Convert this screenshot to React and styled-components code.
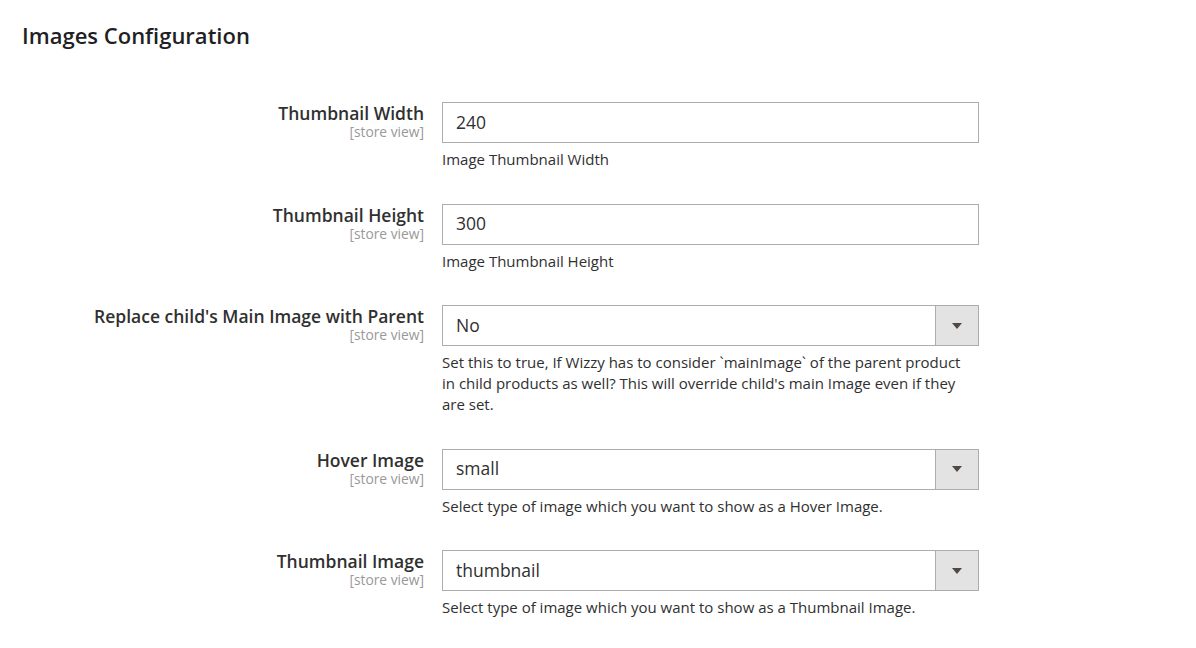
import React from 'react'
import styled, { createGlobalStyle } from 'styled-components'

const GlobalStyle = createGlobalStyle`
  body { margin: 0; background: #fff; font-family: "Open Sans", "Liberation Sans", sans-serif; color: #303030; }
`;

const Page = styled.div`padding:21px 0 0 22px;`;
const Title = styled.h2`margin:0 0 53px;font-size:22px;font-weight:600;line-height:28px;color:#1f1f25;`;
const Form = styled.div`display:flex;flex-direction:column;gap:33.5px;`;
const Row = styled.div`display:grid;grid-template-columns:402px 537px;column-gap:18px;align-items:start;`;
const LabelCol = styled.div`display:flex;flex-direction:column;align-items:flex-end;text-align:right;`;
const Label = styled.label`font-size:17.5px;font-weight:600;line-height:22px;color:#303030;`;
const Scope = styled.span`font-size:13.8px;line-height:16px;color:#999;`;
const Control = styled.div`display:flex;flex-direction:column;`;
const Input = styled.div`height:41px;box-sizing:border-box;border:1px solid #adadad;background:#fff;padding:0 13px 2px;display:flex;align-items:center;font-size:17.5px;color:#303030;`;
const Select = styled.div`height:41px;box-sizing:border-box;border:1px solid #adadad;background:#fff;display:flex;align-items:stretch;`;
const SelectValue = styled.div`flex:1;padding:0 13px 2px;display:flex;align-items:center;font-size:17.5px;color:#303030;`;
const SelectButton = styled.div`width:42px;background:#e3e3e3;border-left:1px solid #adadad;display:flex;align-items:center;justify-content:center;`;
const Arrow = styled.span`width:0;height:0;border-left:5px solid transparent;border-right:5px solid transparent;border-top:6px solid #514943;`;
const Note = styled.div`margin-top:6px;max-width:532px;font-size:15px;line-height:21px;color:#303030;`;

const fields = [
  { label: 'Thumbnail Width', type: 'input', value: '240', note: 'Image Thumbnail Width' },
  { label: 'Thumbnail Height', type: 'input', value: '300', note: 'Image Thumbnail Height' },
  { label: "Replace child's Main Image with Parent", type: 'select', value: 'No', note: "Set this to true, If Wizzy has to consider `mainImage` of the parent product in child products as well? This will override child's main Image even if they are set." },
  { label: 'Hover Image', type: 'select', value: 'small', note: 'Select type of image which you want to show as a Hover Image.' },
  { label: 'Thumbnail Image', type: 'select', value: 'thumbnail', note: 'Select type of image which you want to show as a Thumbnail Image.' },
];

const App = () => {
  return (
    <Page>
      <GlobalStyle />
      <Title>Images Configuration</Title>
      <Form>
        {fields.map((f) => (
          <Row key={f.label}>
            <LabelCol>
              <Label>{f.label}</Label>
              <Scope>[store view]</Scope>
            </LabelCol>
            <Control>
              {f.type === 'input' ? (
                <Input>{f.value}</Input>
              ) : (
                <Select>
                  <SelectValue>{f.value}</SelectValue>
                  <SelectButton><Arrow /></SelectButton>
                </Select>
              )}
              <Note>{f.note}</Note>
            </Control>
          </Row>
        ))}
      </Form>
    </Page>
  )
}

export default App
